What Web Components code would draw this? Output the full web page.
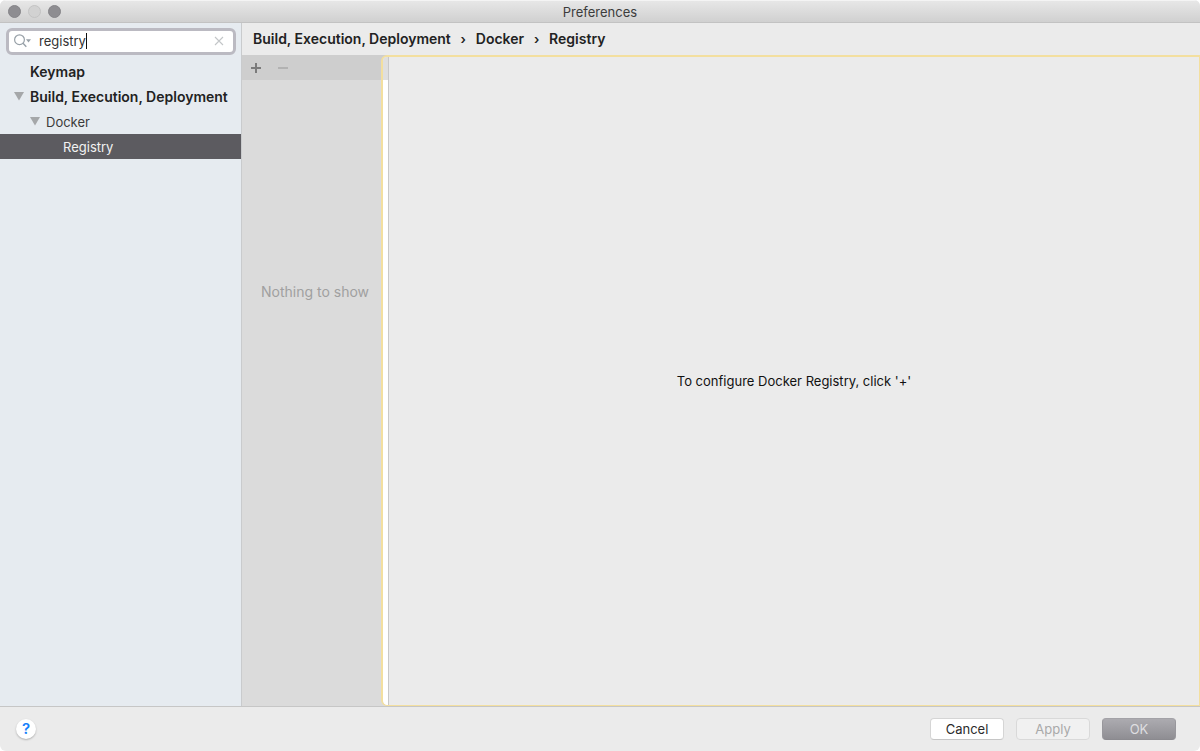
<!DOCTYPE html>
<html lang="en">
<head>
<meta charset="utf-8">
<title>Preferences</title>
<style>
html, body { height: 100%; margin: 0; }
body { background: #fff; color: #222; font: 13px/16px Inter, "Liberation Sans", sans-serif; }
</style>
</head>
<body>
<preferences-window></preferences-window>
<script>
const define = (name, html, setup) => {
  const template = document.createElement("template");
  template.innerHTML = "<style>*{box-sizing:border-box}button,input{font:inherit;color:inherit;margin:0;padding:0;border:0;background:none;outline:0}</style>" + html;
  customElements.define(name, class extends HTMLElement {
    constructor() {
      super();
      this.attachShadow({ mode: "open" }).append(template.content.cloneNode(true));
    }
    connectedCallback() { if (setup) setup(this, this.shadowRoot); }
  });
};

define("title-bar", `
<style>
:host { display: grid; grid-template-columns: 1fr auto 1fr; align-items: center; height: 23px; box-sizing: border-box;
  background: linear-gradient(#e8e8e8, #d0d0d0); border-bottom: 1px solid #c2c2c2; box-shadow: inset 0 1px #f4f4f4; }
.lights { display: flex; gap: 7px; padding-left: 8px; }
button { width: 13px; height: 13px; border-radius: 50%; background: #8e8d91; border: 1px solid #858488; }
.off { background: #d2d2d2; border-color: #c3c3c3; }
h1 { margin: 0; padding-top: 2px; font-size: 13px; font-weight: 400; color: #3c3c3c; }
</style>
<div class="lights"><button aria-label="Close"></button><button class="off" aria-label="Minimize" disabled></button><button aria-label="Zoom"></button></div>
<h1><slot></slot></h1>`);

define("search-field", `
<style>
:host { display: block; padding: 5px 5px 4px 6px; }
.box { display: flex; align-items: center; height: 27px; padding: 0 9px 1px 5px; background: #fff; border: 3px solid #bbbac2; border-radius: 6px; }
svg { display: block; flex: none; }
input { field-sizing: content; width: auto; min-width: 1px; max-width: 160px; height: 18px; margin-left: 8px; color: #333; caret-color: transparent; }
.caret { width: 1px; height: 16px; background: #111; }
button { margin-left: auto; }
</style>
<div class="box">
  <svg width="17" height="14" viewBox="0 0 17 14" aria-hidden="true"><circle cx="5.5" cy="5.7" r="4.9" fill="none" stroke="#98a1a8" stroke-width="1.2"/><path d="M9 9.2l3.3 3.6" stroke="#98a1a8" stroke-width="1.4"/><path d="M12 5.2h5l-2.5 3.2z" fill="#98a1a8"/></svg>
  <input type="text" value="registry" aria-label="Search settings" spellcheck="false"><span class="caret"></span>
  <button aria-label="Clear search"><svg width="10" height="10" viewBox="0 0 10 10"><path d="M1 1l8 8M9 1L1 9" stroke="#c3c6c8" stroke-width="1.1"/></svg></button>
</div>`);

define("tree-row", `
<style>
:host { display: block; }
button { display: flex; align-items: center; width: 100%; height: 25px; text-align: left; white-space: nowrap; padding-left: 14px; }
svg { flex: none; width: 10px; height: 9px; margin-right: 6px; visibility: hidden; }
:host([open]) svg { visibility: visible; }
:host([bold]) button { font-size: 14px; font-weight: 600; }
:host([level="2"]) button { padding-left: 30px; color: #3b3b3b; }
:host([level="3"]) button { padding-left: 47px; }
:host([selected]) button { background: #5c5b60; color: #f2f2f2; }
</style>
<button><svg viewBox="0 0 10 9" aria-hidden="true"><path d="M0 0h10L5 8.5z" fill="#a5a7a9"/></svg><slot></slot></button>`);

define("settings-sidebar", `
<style>
:host { display: block; background: #e6ebf0; border-right: 1px solid #c9cbcd; }
</style>
<search-field></search-field>
<nav aria-label="Settings"><slot></slot></nav>`);

define("crumb-trail", `
<style>
:host { display: flex; align-items: center; height: 32px; padding: 0 11px; font-size: 14px; font-weight: 600; }
a { color: inherit; text-decoration: none; white-space: nowrap; }
span { width: 25px; text-align: center; font-size: 13px; }
</style>
<a href="#build">Build, Execution, Deployment</a><span>›</span><a href="#docker">Docker</a><span>›</span><a href="#registry">Registry</a>`);

define("registry-list", `
<style>
:host { display: flex; flex-direction: column; background: #dbdbdb; }
.tools { display: flex; align-items: center; gap: 15px; height: 25px; padding-left: 8px; background: #cecece; }
button, svg { display: block; }
p { margin: 204px 0 0; padding-left: 7px; text-align: center; font-size: 14px; color: #a0a0a0; }
</style>
<div class="tools">
  <button aria-label="Add"><svg width="12" height="12" viewBox="0 0 12 12"><path d="M6 1v10M1 6h10" stroke="#7b7b7b" stroke-width="2"/></svg></button>
  <button aria-label="Remove" disabled><svg width="12" height="12" viewBox="0 0 12 12"><path d="M1 6h10" stroke="#b2b2b2" stroke-width="2"/></svg></button>
</div>
<p>Nothing to show</p>`);

define("registry-detail", `
<style>
:host { display: block; background: linear-gradient(#cecece 25px, #dbdbdb 25px); }
.frame { display: flex; height: 100%; border: 2px solid #f3df9f; border-right-width: 1px; border-bottom-width: 1px; border-radius: 6px 0 0 6px; overflow: hidden; background: #ebebeb; }
.gutter { width: 6px; border-right: 1px solid #c8c8c8; background: linear-gradient(#dfdfdf 23px, #fff 23px); }
.body { flex: 1; display: grid; place-items: center; color: #111; }
</style>
<div class="frame"><div class="gutter"></div><div class="body"><slot></slot></div></div>`);

define("push-button", `
<style>
:host { display: block; }
button { display: block; width: 74px; height: 22px; border: 1px solid #d5d5d5; border-bottom-color: #c6c6c6; border-radius: 4px; background: #fff; color: #2b2b2b; }
:host([kind="disabled"]) button { background: #f1f1f1; border-color: #d9d9d9; color: #a9a9a9; }
:host([kind="primary"]) button { background: linear-gradient(#acabb0, #8f8e93); border-color: #a3a2a7 #98979c #8b8a8f; color: #dedee0; }
</style>
<button><slot></slot></button>`, (host, root) => {
  root.querySelector("button").disabled = host.getAttribute("kind") === "disabled";
});

define("dialog-footer", `
<style>
:host { display: flex; align-items: center; gap: 12px; height: 45px; padding: 0 24px 0 16px; box-sizing: border-box; border-top: 1px solid #c6c6c6; }
.help { width: 20px; height: 20px; margin-right: auto; border-radius: 50%; background: #fff; box-shadow: 0 1px 2px #00000040; color: #1580fb; font-size: 15px; font-weight: 600; line-height: 20px; }
</style>
<button class="help" aria-label="Help">?</button>
<slot></slot>`);

define("preferences-window", `
<style>
:host { display: grid; grid-template: auto 1fr auto / 242px 1fr; height: 100%; background: #ebebeb; border-radius: 6px; overflow: hidden; }
title-bar, dialog-footer { grid-column: 1 / -1; }
main { display: grid; grid-template: auto 1fr / 139px 1fr; min-width: 0; }
crumb-trail { grid-column: 1 / -1; }
</style>
<title-bar>Preferences</title-bar>
<settings-sidebar>
  <tree-row bold>Keymap</tree-row>
  <tree-row bold open>Build, Execution, Deployment</tree-row>
  <tree-row level="2" open>Docker</tree-row>
  <tree-row level="3" selected>Registry</tree-row>
</settings-sidebar>
<main>
  <crumb-trail></crumb-trail>
  <registry-list></registry-list>
  <registry-detail>To configure Docker Registry, click '+'</registry-detail>
</main>
<dialog-footer><push-button>Cancel</push-button><push-button kind="disabled">Apply</push-button><push-button kind="primary">OK</push-button></dialog-footer>`);
</script>
</body>
</html>
